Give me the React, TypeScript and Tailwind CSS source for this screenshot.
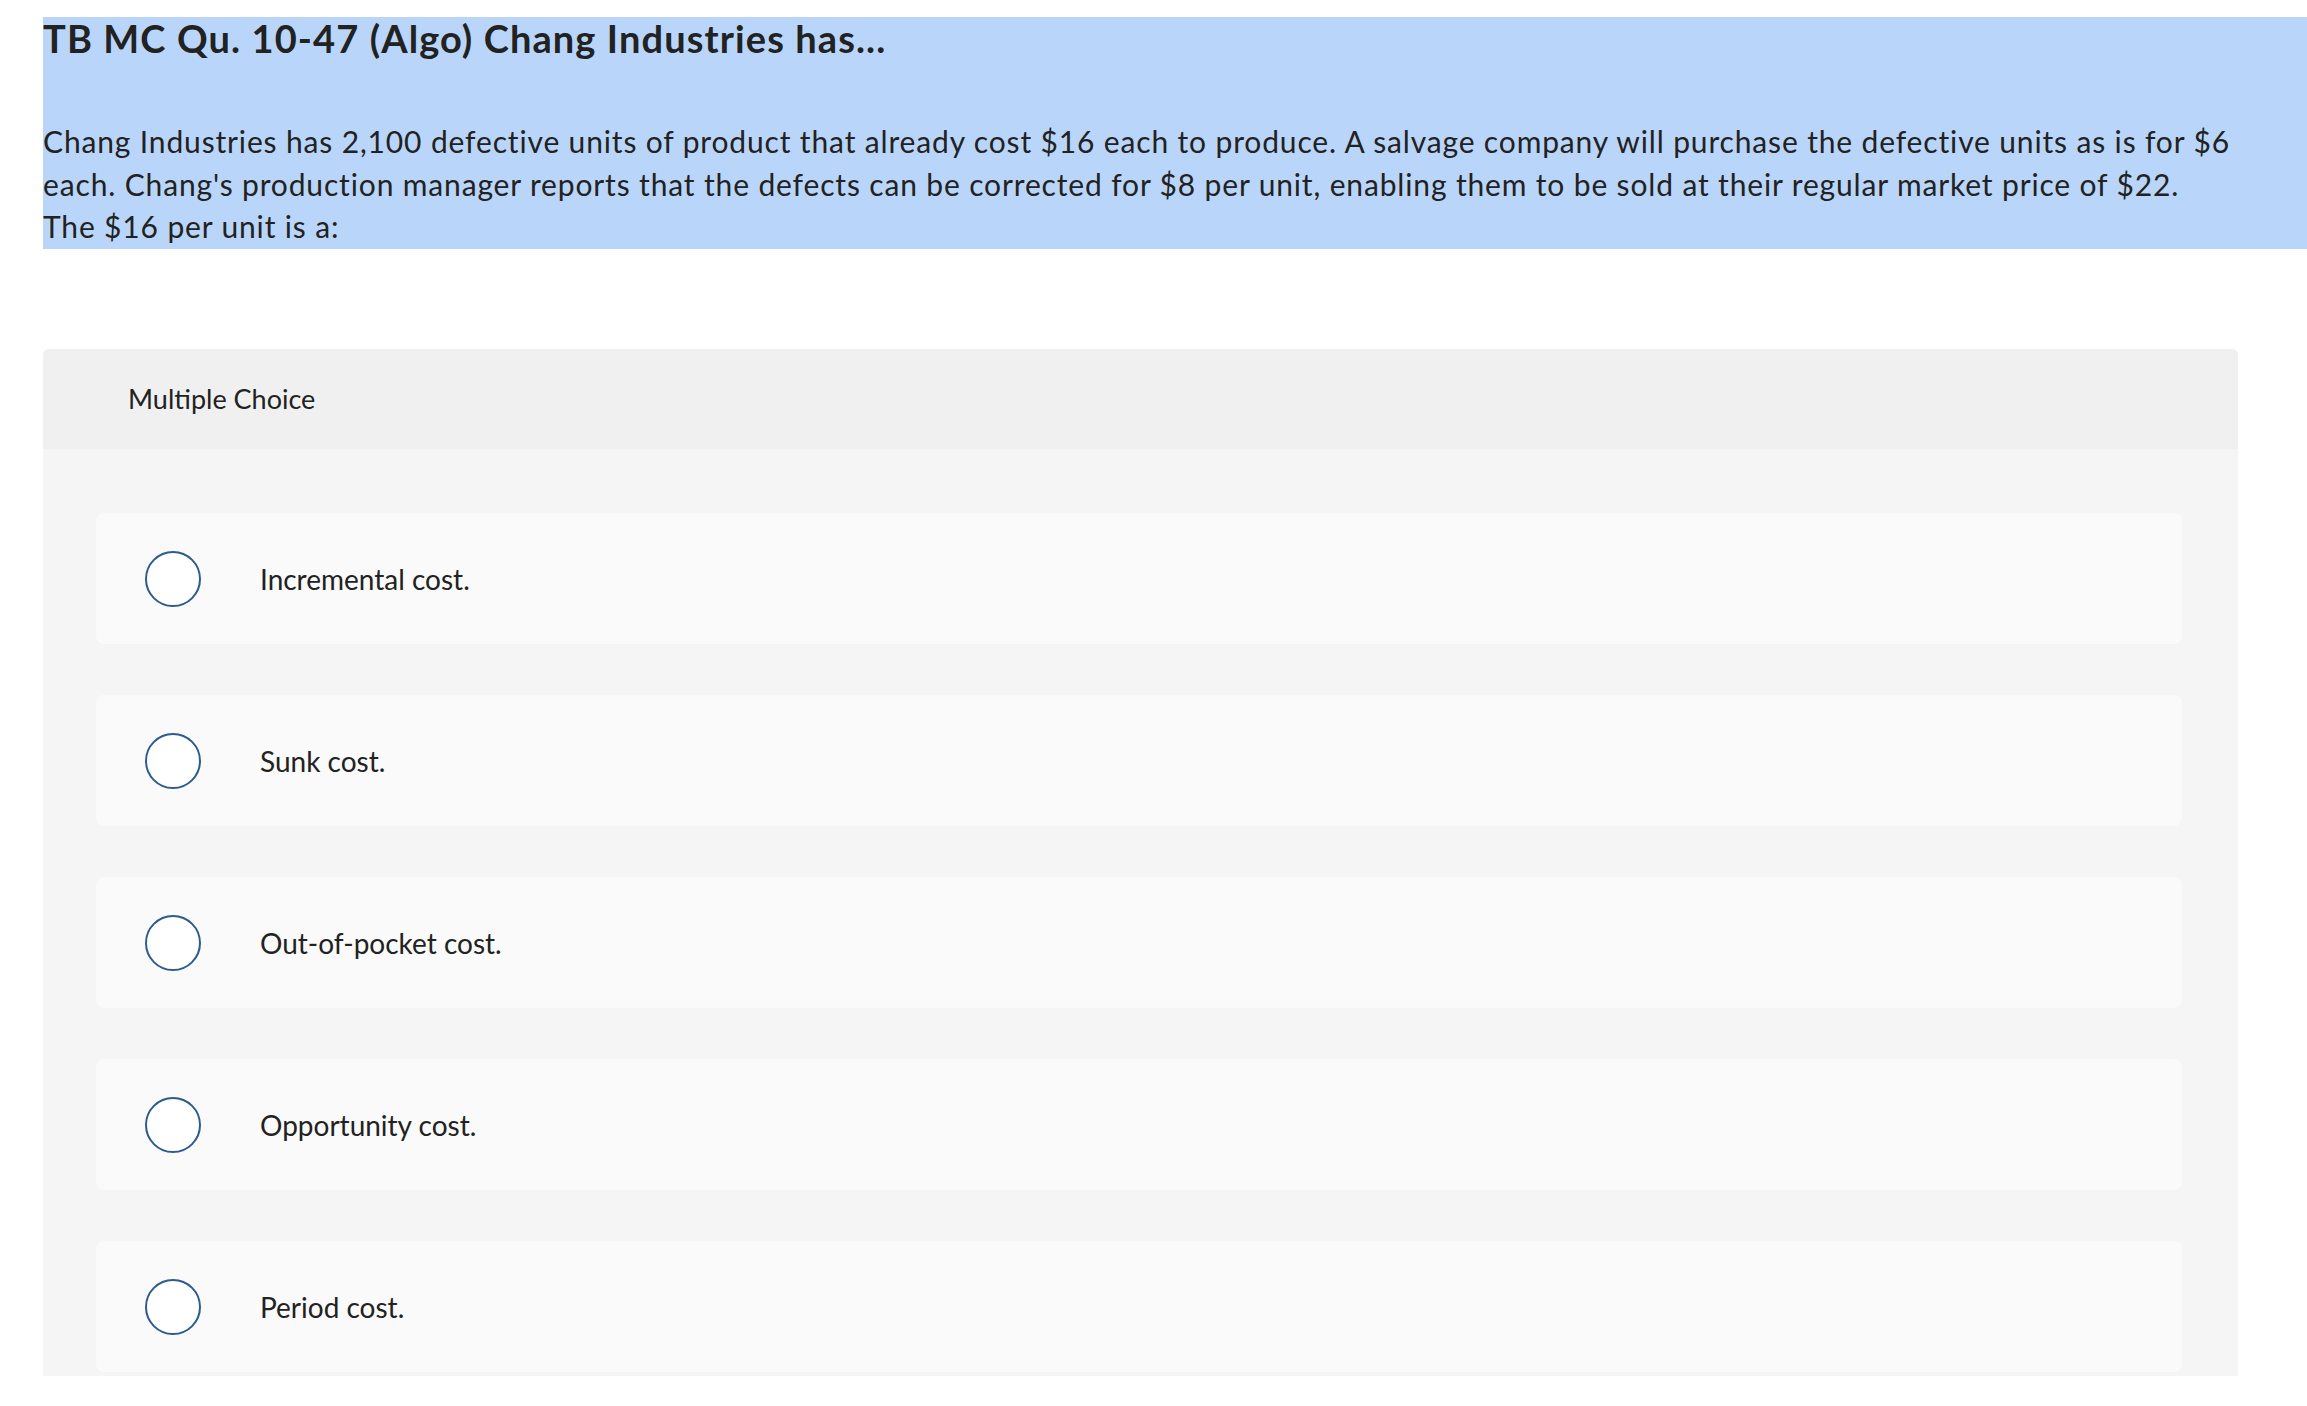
import React from 'react';

const options = [
    'Incremental cost.',
    'Sunk cost.',
    'Out-of-pocket cost.',
    'Opportunity cost.',
    'Period cost.',
];

const OptionRow: React.FC<{ label: string }> = ({ label }) => (
    <div className="flex h-[131px] items-center rounded-lg bg-[#fafafa] pl-[49px]">
        <span className="h-[56px] w-[56px] shrink-0 rounded-full border-2 border-[#2d5b8e] bg-white" />
        <span className="ml-[59px] text-[28px] text-[#222222]">{label}</span>
    </div>
);

export default function App() {
    return (
        <div className="min-h-screen bg-white font-['Lato',sans-serif] text-[#222222]">
            <div className="pl-[43px] pt-[17px]">
                <div className="bg-[#b9d6fa] pb-[1px]">
                    <h1 className="text-[38px] font-bold leading-[43px] tracking-[1.1px]">
                        TB MC Qu. 10-47 (Algo) Chang Industries has...
                    </h1>
                    <p className="mt-[60px] whitespace-nowrap text-[30px] leading-[42.7px] tracking-[0.85px]">
                        Chang Industries has 2,100 defective units of product that already cost $16 each to produce. A salvage company will purchase the defective units as is for $6
                        <br />
                        each. Chang's production manager reports that the defects can be corrected for $8 per unit, enabling them to be sold at their regular market price of $22.
                        <br />
                        The $16 per unit is a:
                    </p>
                </div>
            </div>

            <div className="ml-[43px] mt-[100px] w-[2195px] rounded-t-md bg-[#f5f5f5]">
                <div className="flex h-[100px] items-center rounded-t-md bg-[#f0f0f0] pl-[85px]">
                    <span className="text-[27px] text-[#222222]">Multiple Choice</span>
                </div>
                <div className="flex flex-col gap-[51px] pb-[4px] pl-[53px] pr-[56px] pt-[64px]">
                    {options.map((o) => (
                        <OptionRow key={o} label={o} />
                    ))}
                </div>
            </div>
        </div>
    );
}
